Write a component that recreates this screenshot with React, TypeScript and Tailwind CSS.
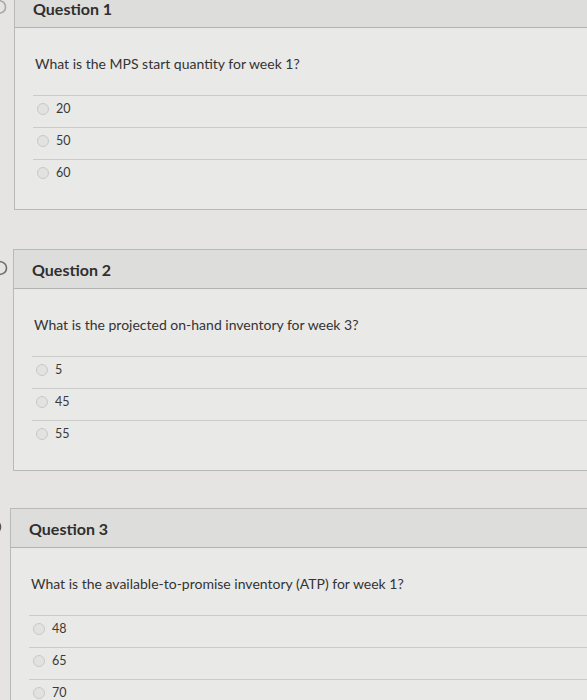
const questions = [
  {
    title: "Question 1",
    prompt: "What is the MPS start quantity for week 1?",
    options: ["20", "50", "60"],
    gutter: "w-[14px]",
    top: "-mt-[12px]",
    mark: "-ml-[2px] text-[#a9a9a9]",
  },
  {
    title: "Question 2",
    prompt: "What is the projected on-hand inventory for week 3?",
    options: ["5", "45", "55"],
    gutter: "w-[13px]",
    top: "mt-[39px]",
    mark: "-ml-[1px] text-[#6e6e6e]",
  },
  {
    title: "Question 3",
    prompt: "What is the available-to-promise inventory (ATP) for week 1?",
    options: ["48", "65", "70"],
    gutter: "w-[10px]",
    top: "mt-[37px]",
    mark: "-ml-[7px] text-[#555555]",
  },
];

const Marker = ({ className }: { className: string }) => (
  <svg
    width="10"
    height="16"
    viewBox="0 0 10 16"
    className={className}
    fill="none"
    stroke="currentColor"
    strokeWidth="1.6"
  >
    <path d="M1 1.5c4 0.8 6.5 3.5 6.5 6.5S5 13.7 1 14.5" />
  </svg>
);

const Radio = () => (
  <span className="inline-block h-[12px] w-[12px] rounded-full border border-[#c9c9c7] bg-[#e2e2e0]" />
);

const QuestionCard = ({ q }: { q: (typeof questions)[number] }) => (
  <div className={`flex ${q.top}`}>
    {/* left gutter with the flag marker */}
    <div className={`${q.gutter} shrink-0 pt-[11px]`}>
      <Marker className={q.mark} />
    </div>

    <div className="flex-1 border-y border-l border-[#b9b9b7] bg-[#e9e9e7]">
      <div className="flex h-[39px] items-center border-b border-[#b3b3b1] bg-[#dddddb] pl-[18px] pt-[1px]">
        <h2 className="text-[16px] font-bold text-[#2f2f2f]">{q.title}</h2>
      </div>

      <div className="pl-[18px] pt-[27px] pb-[18px]">
        <p className="pl-[2px] text-[14px] leading-[18px] text-[#343434]">{q.prompt}</p>

        <div className="mt-[22px]">
          {q.options.map((opt) => (
            <div
              key={opt}
              className="flex h-[32px] items-start gap-[7px] border-t border-[#cbcbc9] pl-[4px] pt-[6px]"
            >
              <span className="flex h-[14px] items-center">
                <Radio />
              </span>
              <span className="text-[12.5px] leading-[14px] text-[#3a3a3a]">{opt}</span>
            </div>
          ))}
        </div>
      </div>
    </div>
  </div>
);

export default function App() {
  return (
    <div
      className="h-[700px] w-[587px] overflow-hidden bg-[#e5e4e2]"
      style={{ fontFamily: "Lato, 'Open Sans', sans-serif" }}
    >
      {questions.map((q) => (
        <QuestionCard key={q.title} q={q} />
      ))}
    </div>
  );
}
